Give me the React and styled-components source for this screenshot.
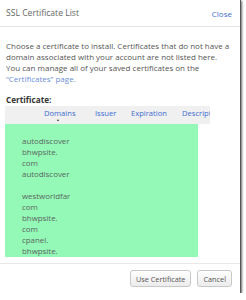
import styled, { createGlobalStyle } from "styled-components";

const GlobalStyle = createGlobalStyle`
  body {
    margin: 0;
    background: #fff;
    font-family: "Open Sans", "Liberation Sans", sans-serif;
  }
`;

const Dialog = styled.div`
  width: 241px;
  height: 293px;
  background: #fff;
  border-right: 1px solid #555;
  box-shadow: 1px 1px 2px rgba(0, 0, 0, 0.6);
  display: flex;
  flex-direction: column;
  box-sizing: border-box;
  overflow: hidden;
`;

const Header = styled.div`
  height: 27px;
  display: flex;
  align-items: center;
  justify-content: space-between;
  padding: 0 8px 0 6px;
  border-bottom: 1px solid #e6e6e6;
  box-sizing: border-box;
`;

const Title = styled.span`
  font-size: 8.6px;
  color: #666;
`;

const CloseLink = styled.span`
  font-size: 8px;
  color: #3f6fd0;
`;

const Body = styled.div`
  flex: 1;
  padding: 13px 6px 0 6px;
`;

const Intro = styled.p`
  margin: 0;
  font-size: 8px;
  line-height: 11px;
  color: #555;
  white-space: nowrap;
`;

const Link = styled.span`
  color: #6b8fda;
`;

const Label = styled.div`
  margin-top: 10px;
  font-size: 8.2px;
  line-height: 11px;
  font-weight: bold;
  color: #333;
`;

const Table = styled.div`
  margin: 1px 0 0 -1px;
  width: 205px;
`;

const HeadRow = styled.div`
  display: flex;
  height: 18px;
  background: #f0f0f0;
  overflow: hidden;
`;

const HeadCell = styled.div`
  flex: none;
  width: ${(p) => p.$w}px;
  padding-left: ${(p) => p.$pad || 0}px;
  box-sizing: border-box;
  font-size: 7.6px;
  line-height: 14px;
  color: #3f6bd0;
  white-space: nowrap;
  overflow: hidden;
  position: relative;
`;

const SortMark = styled.span`
  position: absolute;
  left: 52px;
  top: 13px;
  width: 0;
  height: 0;
  border-left: 1.5px solid transparent;
  border-right: 1.5px solid transparent;
  border-bottom: 2.5px solid #333;
`;

const Rows = styled.div`
  width: 193px;
  height: 133px;
  background: #94f8b6;
  padding: 12px 0 0 17px;
  box-sizing: border-box;
  overflow: hidden;
`;

const DomainLine = styled.div`
  width: 48px;
  height: 11px;
  font-size: 7.9px;
  line-height: 11px;
  color: #5a675e;
  white-space: nowrap;
  overflow: hidden;
`;

const Footer = styled.div`
  height: 30px;
  border-top: 1px solid #e8e8e8;
  display: flex;
  justify-content: flex-end;
  align-items: flex-start;
  gap: 6px;
  padding: 6px 8px 0 0;
  box-sizing: border-box;
`;

const Button = styled.button`
  height: 17px;
  padding: 0 ${(p) => p.$pad}px;
  font-family: "Open Sans", "Liberation Sans", sans-serif;
  font-size: 7.3px;
  color: #555;
  background: linear-gradient(#ffffff, #ececec);
  border: 1px solid #c8c8c8;
  border-radius: 3px;
`;

const domains = [
  "autodiscover.",
  "bhwpsite.",
  "com",
  "autodiscover.",
  "",
  "westworldfarms.",
  "com",
  "bhwpsite.",
  "com",
  "cpanel.",
  "bhwpsite.",
  "com",
];

export default function App() {
  return (
    <>
      <GlobalStyle />
      <Dialog>
        <Header>
          <Title>SSL Certificate List</Title>
          <CloseLink>Close</CloseLink>
        </Header>
        <Body>
          <Intro>
            Choose a certificate to install. Certificates that do not have a
            <br />
            domain associated with your account are not listed here.
            <br />
            You can manage all of your saved certificates on the
            <br />
            <Link>“Certificates” page.</Link>
          </Intro>
          <Label>Certificate:</Label>
          <Table>
            <HeadRow>
              <HeadCell $w={90} $pad={39}>
                Domains
                <SortMark />
              </HeadCell>
              <HeadCell $w={36}>Issuer</HeadCell>
              <HeadCell $w={51}>Expiration</HeadCell>
              <HeadCell $w={28}>Description</HeadCell>
            </HeadRow>
            <Rows>
              {domains.map((d, i) => (
                <DomainLine key={i}>{d}</DomainLine>
              ))}
            </Rows>
          </Table>
        </Body>
        <Footer>
          <Button $pad={5}>Use Certificate</Button>
          <Button $pad={5}>Cancel</Button>
        </Footer>
      </Dialog>
    </>
  );
}
